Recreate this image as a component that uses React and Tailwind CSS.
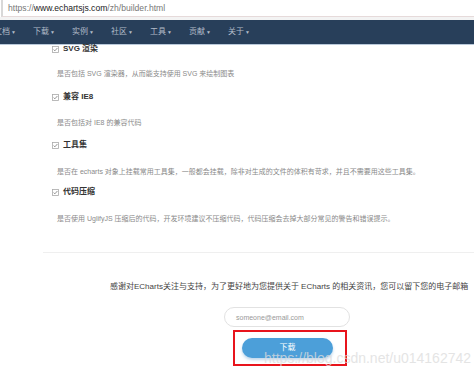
import React from "react";

const CJK = { fontFamily: '"Liberation Sans", "Noto Sans CJK SC", sans-serif' };

function Check() {
  return (
    <svg width="7" height="7" viewBox="0 0 7 7" className="shrink-0">
      <rect x="0.5" y="0.5" width="6" height="6" fill="#fff" stroke="#aaa" strokeWidth="0.8" />
      <path d="M1.6 3.6 L2.9 4.8 L5.4 2.0" fill="none" stroke="#888" strokeWidth="0.9" />
    </svg>
  );
}

function Item({ title, desc, descMt }) {
  return (
    <div className="h-[48px]">
      <div className="h-[10px] flex items-center ml-[52px]">
        <Check />
        <span className="ml-[4px] text-[8px] font-bold text-[#333] leading-none">{title}</span>
      </div>
      <div className={`${descMt} h-[10px] flex items-center ml-[57px] text-[7px] text-[#8a8a8a] leading-none whitespace-nowrap`}>
        {desc}
      </div>
    </div>
  );
}

export default function App() {
  const nav = ["文档", "下载", "实例", "社区", "工具", "贡献", "关于"];
  return (
    <div className="relative w-[474px] h-[379px] bg-white overflow-hidden" style={CJK}>
      {/* URL bar */}
      <div className="h-[17px] border-b border-[#e6dada] flex items-center border-l-2 border-l-[#d8d8d8] ml-[1px]">
        <span className="ml-[5px] text-[8.6px] leading-none whitespace-nowrap text-[#777]">
          https://<span className="text-[#222]">www.echartsjs.com</span>/zh/builder.html
        </span>
      </div>
      <div className="h-[3px] bg-[#f3f3f3]" />
      {/* Nav */}
      <div className="h-[25px] bg-[#283f5a] border-b border-[#b9c9da] flex items-center overflow-hidden">
        <div className="flex ml-[-6px]">
          {nav.map((n) => (
            <div key={n} className="w-[39px] shrink-0 flex items-center text-[8px] text-[#b3bdc9] leading-none whitespace-nowrap">
              {n}
              <span className="ml-[1px] text-[5px]">▼</span>
            </div>
          ))}
        </div>
      </div>
      {/* Options */}
      <div className="mt-[-1px]">
        <Item title="SVG 渲染" desc="是否包括 SVG 渲染器，从而能支持使用 SVG 来绘制图表" descMt="mt-[14px]" />
        <Item title="兼容 IE8" desc="是否包括对 IE8 的兼容代码" descMt="mt-[15px]" />
        <Item title="工具集" desc="是否在 echarts 对象上挂载常用工具集，一般都会挂载，除非对生成的文件的体积有苛求，并且不需要用这些工具集。" descMt="mt-[16px]" />
        <div className="mt-[-1px]">
          <Item title="代码压缩" desc="是否使用 UglifyJS 压缩后的代码，开发环境建议不压缩代码，代码压缩会去掉大部分常见的警告和错误提示。" descMt="mt-[16px]" />
        </div>
      </div>
      {/* divider */}
      <div className="mt-[17px] ml-[43px] border-t border-[#efefef]" />
      {/* Subscribe */}
      <div className="mt-[29px] h-[10px] flex items-center ml-[110px] text-[8px] text-[#444] leading-none whitespace-nowrap">
        感谢对ECharts关注与支持，为了更好地为您提供关于 ECharts 的相关资讯，您可以留下您的电子邮箱
      </div>
      <div className="mt-[15px] ml-[224px] w-[126px] h-[20px] rounded-full border border-[#e2e2e2] flex items-center pl-[11px] text-[7px] text-[#999] leading-none">
        someone@email.com
      </div>
      <div className="mt-[3px] ml-[233px] w-[114px] h-[36px] border-2 border-[#e8141c] pl-[7px] pt-[6px]">
        <div className="w-[91px] h-[20px] rounded-full bg-[#4c9fd9] shadow-[0_2px_3px_rgba(70,140,200,0.35)] flex items-center justify-center text-[8px] text-white leading-none">
          下载
        </div>
      </div>
      {/* watermark */}
      <div className="absolute left-[264px] top-[351px] text-[14px] leading-none text-[#dcdcdc] opacity-75 whitespace-nowrap" style={{ fontFamily: '"Liberation Sans", sans-serif' }}>
        https://blog.csdn.net/u014162742
      </div>
    </div>
  );
}
